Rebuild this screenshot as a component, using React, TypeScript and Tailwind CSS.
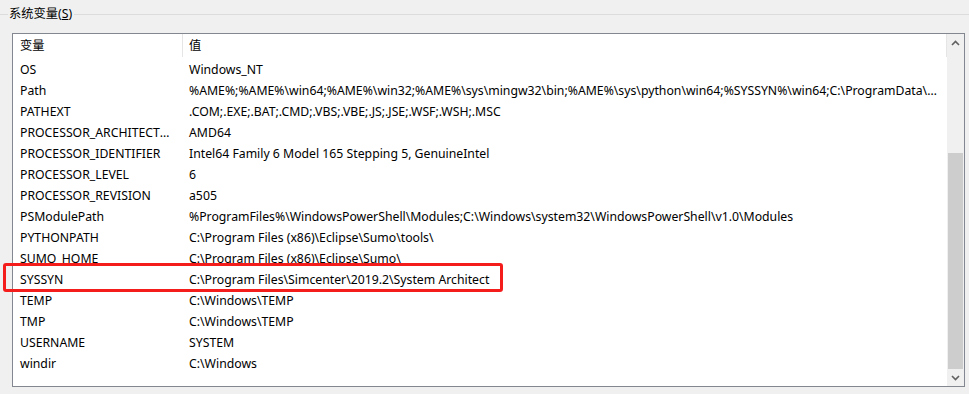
import React from 'react';

const rows: [string, string][] = [
  ['OS', 'Windows_NT'],
  ['Path', '%AME%;%AME%\\win64;%AME%\\win32;%AME%\\sys\\mingw32\\bin;%AME%\\sys\\python\\win64;%SYSSYN%\\win64;C:\\ProgramData\\Oracle\\Java\\javapath'],
  ['PATHEXT', '.COM;.EXE;.BAT;.CMD;.VBS;.VBE;.JS;.JSE;.WSF;.WSH;.MSC'],
  ['PROCESSOR_ARCHITECTURE', 'AMD64'],
  ['PROCESSOR_IDENTIFIER', 'Intel64 Family 6 Model 165 Stepping 5, GenuineIntel'],
  ['PROCESSOR_LEVEL', '6'],
  ['PROCESSOR_REVISION', 'a505'],
  ['PSModulePath', '%ProgramFiles%\\WindowsPowerShell\\Modules;C:\\Windows\\system32\\WindowsPowerShell\\v1.0\\Modules'],
  ['PYTHONPATH', 'C:\\Program Files (x86)\\Eclipse\\Sumo\\tools\\'],
  ['SUMO_HOME', 'C:\\Program Files (x86)\\Eclipse\\Sumo\\'],
  ['SYSSYN', 'C:\\Program Files\\Simcenter\\2019.2\\System Architect'],
  ['TEMP', 'C:\\Windows\\TEMP'],
  ['TMP', 'C:\\Windows\\TEMP'],
  ['USERNAME', 'SYSTEM'],
  ['windir', 'C:\\Windows'],
];

export default function App() {
  return (
    <div
      className="relative w-[969px] h-[394px] bg-[#f0f0f0] overflow-hidden text-[12.25px] text-black"
      style={{ fontFamily: '"Noto Sans", "Noto Sans CJK SC", sans-serif' }}
    >
      {/* group box title */}
      <div className="flex items-center h-[28px]">
        <div className="w-[8px] h-px bg-[#dcdcdc]" />
        <span className="px-[1px] leading-[28px]">
          系统变量(<span className="underline">S</span>)
        </span>
        <div className="flex-1 h-px bg-[#dcdcdc] ml-[1px]" />
      </div>

      {/* list box */}
      <div className="ml-[12px] mt-[5px] w-[953px] h-[354px] border border-[#828790] bg-white flex overflow-hidden">
        <div className="flex-1 min-w-0 flex flex-col">
          <div className="flex h-[26px] items-start">
            <div className="w-[169px] pl-[7px] pt-[3px]">变量</div>
            <div className="w-px h-[23px] bg-[#e5e5e5]" />
            <div className="flex-1 pl-[6px] pt-[3px]">值</div>
            <div className="w-px h-[23px] bg-[#e5e5e5]" />
          </div>
          {rows.map(([k, v]) => (
            <div key={k} className="flex h-[21px] shrink-0 items-center">
              <div className="w-[170px] pl-[7px] pr-[6px] truncate">{k}</div>
              <div className="flex-1 min-w-0 pl-[6px] pr-[8px] truncate">{v}</div>
            </div>
          ))}
        </div>

        {/* scrollbar */}
        <div className="w-[17px] bg-[#f0f0f0] flex flex-col">
          <div className="h-[17px] flex items-center justify-center">
            <svg width="9" height="6" viewBox="0 0 9 6">
              <path d="M1 5 L4.5 1.5 L8 5" fill="none" stroke="#606060" strokeWidth="1.6" />
            </svg>
          </div>
          <div className="h-[102px]" />
          <div className="flex-1 mx-[1px] bg-[#cdcdcd]" />
          <div className="h-[17px] flex items-center justify-center">
            <svg width="9" height="6" viewBox="0 0 9 6">
              <path d="M1 1 L4.5 4.5 L8 1" fill="none" stroke="#606060" strokeWidth="1.6" />
            </svg>
          </div>
        </div>
      </div>

      {/* red highlight */}
      <div className="absolute left-[3px] top-[263px] w-[500px] h-[29px] border-[3px] border-[#f51c1c] rounded-[3px]" />
    </div>
  );
}
